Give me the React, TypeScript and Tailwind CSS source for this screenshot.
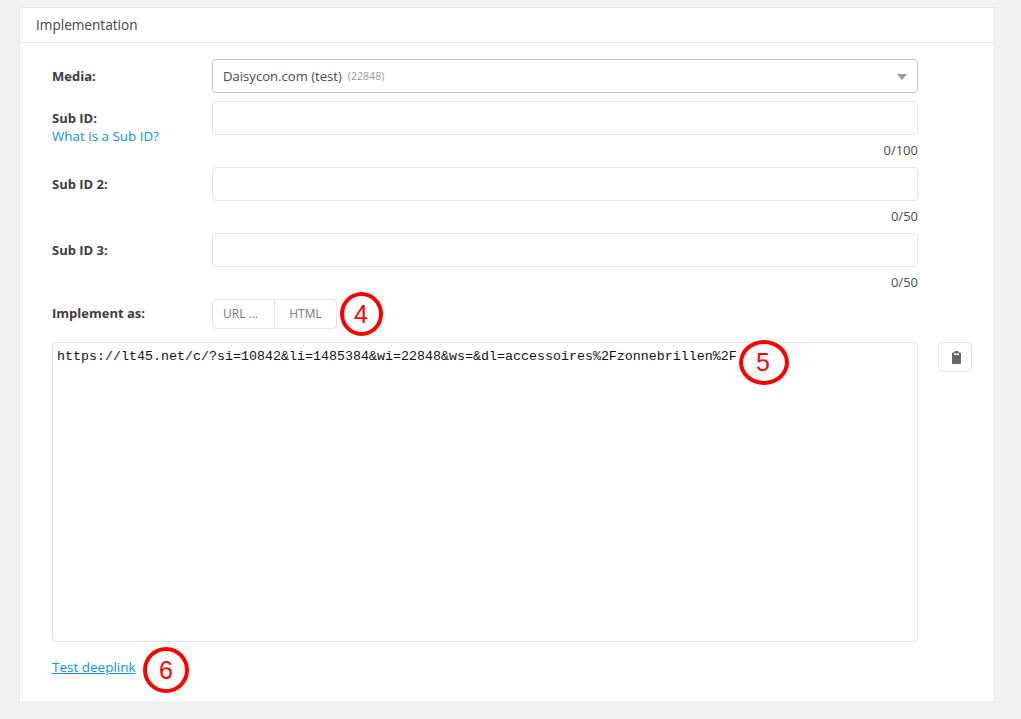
import React from 'react';

const Marker = ({ n, className }: { n: number; className: string }) => (
  <div
    className={`absolute rounded-[50%] border-[4px] border-[#f00] bg-transparent flex items-center justify-center text-[#f00] text-[25px] leading-none font-['Liberation_Sans',sans-serif] ${className}`}
  >
    {n}
  </div>
);

const SubField = ({ label, max, help }: { label: string; max: number; help?: boolean }) => (
  <div className="flex">
    <div className="w-[160px] shrink-0 pt-[8px]">
      <div className="font-bold text-[13px] leading-[18px] text-[#3d3d3d]">{label}</div>
      {help && <a className="block text-[13.4px] leading-[18px] text-[#0a94e0]">What is a Sub ID?</a>}
    </div>
    <div className="w-[706px]">
      <input className="block w-full h-[34px] bg-white border border-[#e6e6e6] rounded-[4px]" />
      <div className="h-[32px] pt-[6px] text-right text-[13px] leading-[18px] text-[#4a4a4a]">0/{max}</div>
    </div>
  </div>
);

export default function App() {
  return (
    <div className="min-h-[719px] bg-[#f2f2f2] pt-[7px] pl-[19px] pr-[26px] font-['Open_Sans',sans-serif]">
      <div className="relative bg-white border border-[#e6e6e6] h-[696px]">
        {/* Header */}
        <div className="h-[35px] border-b border-[#e6e6e6] pl-[16px] pt-[1px] flex items-center text-[13.6px] text-[#444]">
          Implementation
        </div>

        <div className="pt-[16px] pl-[32px]">
          <div className="flex mb-[8px]">
            <div className="w-[160px] shrink-0 pt-[2px] flex items-center font-bold text-[13px] text-[#3d3d3d]">Media:</div>
            <div className="w-[706px] h-[34px] pt-[1px] border border-[#c4c4c4] rounded-[4px] flex items-center pl-[10px] pr-[10px]">
              <span className="text-[13.1px] text-[#4a4a4a]">Daisycon.com (test)</span>
              <span className="ml-[6px] text-[10.6px] text-[#999]">(22848)</span>
              <div className="ml-auto w-0 h-0 border-x-[5px] border-x-transparent border-t-[6px] border-t-[#999]" />
            </div>
          </div>

          <SubField label="Sub ID:" max={100} help />
          <SubField label="Sub ID 2:" max={50} />
          <SubField label="Sub ID 3:" max={50} />

          <div className="flex items-center h-[30px]">
            <div className="w-[160px] shrink-0 font-bold text-[13px] text-[#3d3d3d]">Implement as:</div>
            <div className="flex h-[30px] border border-[#e6e6e6] rounded-[4px] text-[12px] text-[#777]">
              <div className="w-[62px] pl-[10px] flex items-center border-r border-[#e6e6e6]">URL ...</div>
              <div className="w-[61px] flex items-center justify-center">HTML</div>
            </div>
          </div>

          <div className="flex mt-[13px]">
            <textarea
              readOnly
              value="https://lt45.net/c/?si=10842&li=1485384&wi=22848&ws=&dl=accessoires%2Fzonnebrillen%2F"
              className="block w-[866px] h-[300px] border border-[#e6e6e6] rounded-[4px] px-[4px] pt-[6px] pb-[4px] resize-none text-[13.333px] leading-[15px] text-[#111] font-['Liberation_Mono',monospace] outline-none"
            />
            <button className="ml-[20px] w-[34px] h-[30px] border border-[#e6e6e6] rounded-[4px] flex items-center justify-center">
              <svg className="ml-[2px]" width="9" height="13" viewBox="0 0 9 13">
                <path fill="#666" d="M2.500 1.500V1a1 1 0 0 1 1-1h2a1 1 0 0 1 1 1v.5H8a1 1 0 0 1 1 1V12a1 1 0 0 1-1 1H1a1 1 0 0 1-1-1V2.500a1 1 0 0 1 1-1z" />
                <rect x="2" y="2.500" width="5" height="1.500" fill="#fff" />
              </svg>
            </button>
          </div>

          <a className="block mt-[16px] w-fit text-[13.5px] leading-[18px] underline text-[#0a94e0]">Test deeplink</a>
        </div>

        {/* Annotations */}
        <Marker n={4} className="left-[320px] top-[284px] w-[43px] h-[44px] pr-[1px]" />
        <Marker n={5} className="left-[719px] top-[332px] w-[50px] h-[45px] pr-[2px]" />
        <Marker n={6} className="left-[123px] top-[639px] w-[46px] h-[46px]" />
      </div>
    </div>
  );
}
